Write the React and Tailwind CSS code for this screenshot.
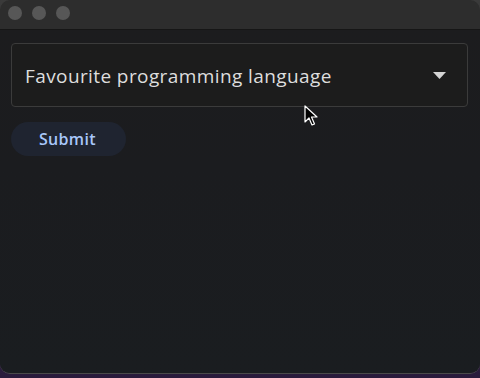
export default function App() {
  return (
    <div className="w-[480px] h-[378px] bg-[linear-gradient(180deg,#3a3a3a_0%,#2a2533_60%,#2a1b3c_100%)] overflow-hidden relative" style={{ fontFamily: "'Open Sans', 'Noto Sans', sans-serif" }}>
      <div className="w-[480px] h-[374px] rounded-[10px] overflow-hidden flex flex-col border-b border-[#4a4a4a]">
        <div className="h-[30px] shrink-0 bg-[#2d2d2d] border-b border-[#161616] flex items-center gap-[10px] pl-[8px] pb-[4px]">
          <div className="w-[14px] h-[14px] rounded-full bg-[#575757]" />
          <div className="w-[14px] h-[14px] rounded-full bg-[#575757]" />
          <div className="w-[14px] h-[14px] rounded-full bg-[#575757]" />
        </div>
        <div className="flex-1 bg-[linear-gradient(180deg,#1c1c1e_0%,#1b1c1f_40%,#1a1d20_100%)] pl-[11px] pt-[13px] flex flex-col items-start">
          <div className="w-[457px] h-[64px] rounded-[4px] border border-[#3b3b3b] bg-[#1c1c1c] flex items-center justify-between pl-[13px] pr-[21px]">
            <span className="text-[19px] leading-[24px] text-[#dedede] tracking-[0.4px] pt-[1px]">Favourite programming language</span>
            <svg width="13" height="7" viewBox="0 0 13 7"><path d="M0 0 L13 0 L6.5 7 Z" fill="#d4d4d4" /></svg>
          </div>
          <button className="mt-[15px] h-[34px] w-[115px] rounded-full bg-[#1f2430] text-[16px] font-semibold text-[#a8c7fa] text-left pl-[28px] tracking-[0.3px]">Submit</button>
        </div>
      </div>
      <svg className="absolute left-[304px] top-[105px]" width="14" height="22" viewBox="0 0 14 22">
        <path d="M1 1 L1 17 L5 13 L8 20 L10.5 19 L7.5 12 L13 12 Z" fill="#000" stroke="#fff" strokeWidth="1.2" strokeLinejoin="round" />
      </svg>
    </div>
  );
}
